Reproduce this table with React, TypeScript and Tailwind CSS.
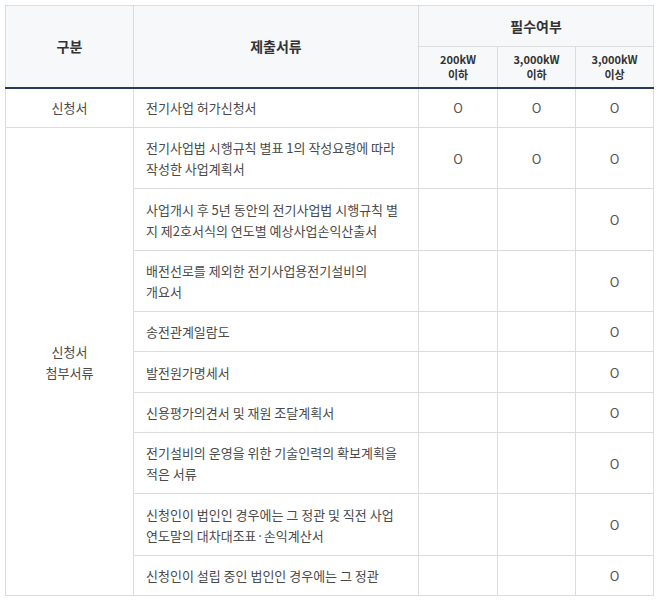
import React from 'react';

type Row = {
  doc: string[];
  h: string;
  marks: [boolean, boolean, boolean];
};

// 신청서 첨부서류 행
const ATTACH_ROWS: Row[] = [
  { doc: ['전기사업법 시행규칙 별표 1의 작성요령에 따라', '작성한 사업계획서'], h: 'h-[61px]', marks: [true, true, true] },
  { doc: ['사업개시 후 5년 동안의 전기사업법 시행규칙 별', '지 제2호서식의 연도별 예상사업손익산출서'], h: 'h-[62px]', marks: [false, false, true] },
  { doc: ['배전선로를 제외한 전기사업용전기설비의', '개요서'], h: 'h-[61px]', marks: [false, false, true] },
  { doc: ['송전관계일람도'], h: 'h-[40px]', marks: [false, false, true] },
  { doc: ['발전원가명세서'], h: 'h-[41px]', marks: [false, false, true] },
  { doc: ['신용평가의견서 및 재원 조달계획서'], h: 'h-[40px]', marks: [false, false, true] },
  { doc: ['전기설비의 운영을 위한 기술인력의 확보계획을', '적은 서류'], h: 'h-[61px]', marks: [false, false, true] },
  { doc: ['신청인이 법인인 경우에는 그 정관 및 직전 사업', '연도말의 대차대조표·손익계산서'], h: 'h-[62px]', marks: [false, false, true] },
  { doc: ['신청인이 설립 중인 법인인 경우에는 그 정관'], h: 'h-[40px]', marks: [false, false, true] },
];

const cell = 'border border-[#dcdcdc] align-middle';
const th = `${cell} bg-[#f7f8fa] text-center font-bold text-[#333]`;
const navy = 'border-b-2 border-b-[#253a5e]';

function Mark({ on }: { on: boolean }) {
  return <td className={`${cell} text-center text-[13px] text-[#555]`}>{on ? 'O' : ''}</td>;
}

export default function App() {
  return (
    <div
      className="min-h-[602px] w-[661px] bg-white pl-[5px] pt-[5px]"
      style={{ fontFamily: '"Noto Sans CJK KR", "Noto Sans", sans-serif' }}
    >
      <table className="w-[648px] table-fixed border-collapse border border-[#dcdcdc]">
        <colgroup>
          <col className="w-[128px]" />
          <col className="w-[285px]" />
          <col className="w-[79px]" />
          <col className="w-[78px]" />
          <col className="w-[78px]" />
        </colgroup>
        <thead>
          <tr className="h-[41px]">
            <th rowSpan={2} className={`${th} ${navy} text-[14px]`}>구분</th>
            <th rowSpan={2} className={`${th} ${navy} text-[14px]`}>제출서류</th>
            <th colSpan={3} className={`${th} text-[14px]`}>필수여부</th>
          </tr>
          <tr className="h-[41px]">
            <th className={`${th} ${navy} text-[11px] leading-[15px]`}>200kW<br />이하</th>
            <th className={`${th} ${navy} text-[11px] leading-[15px]`}>3,000kW<br />이하</th>
            <th className={`${th} ${navy} text-[11px] leading-[15px]`}>3,000kW<br />이상</th>
          </tr>
        </thead>
        <tbody className="text-[13px] leading-[21px] text-[#4a4a4a]">
          <tr className="h-[40px]">
            <td className={`${cell} text-center`}>신청서</td>
            <td className={`${cell} whitespace-nowrap px-3`}>전기사업 허가신청서</td>
            <Mark on />
            <Mark on />
            <Mark on />
          </tr>
          {ATTACH_ROWS.map((row, i) => (
            <tr key={i} className={row.h}>
              {i === 0 && (
                <td rowSpan={ATTACH_ROWS.length} className={`${cell} text-center`}>
                  신청서
                  <br />
                  첨부서류
                </td>
              )}
              <td className={`${cell} whitespace-nowrap px-3`}>
                {row.doc.map((line, j) => (
                  <div key={j}>{line}</div>
                ))}
              </td>
              <Mark on={row.marks[0]} />
              <Mark on={row.marks[1]} />
              <Mark on={row.marks[2]} />
            </tr>
          ))}
        </tbody>
      </table>
    </div>
  );
}
